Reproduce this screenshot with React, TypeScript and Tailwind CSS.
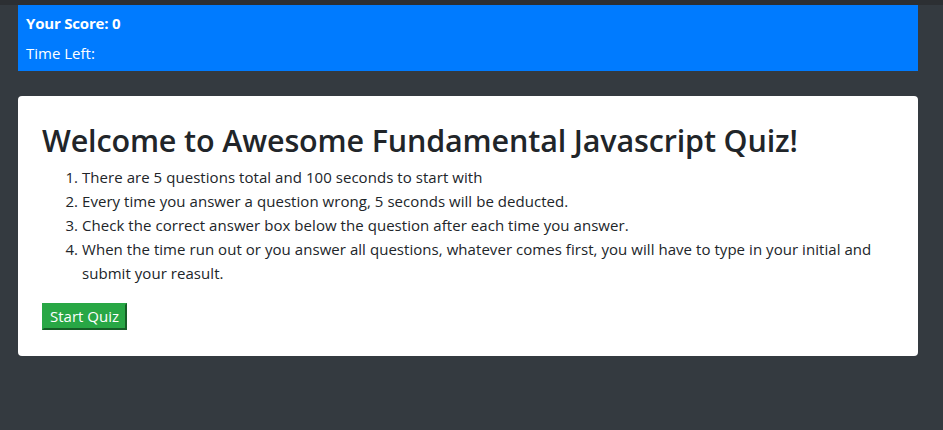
export default function App() {
  const font = { fontFamily: '"Open Sans", "Noto Sans", sans-serif' };
  return (
    <div className="min-h-[430px] bg-[#343a40] text-[#212529]" style={font}>
      <div className="h-[5px] bg-[#2c2f33]" />
      <div className="ml-[18px] w-[900px]">
        <div className="bg-[#007bff] text-white px-2 pt-[6px] pb-[6px] flex flex-col gap-[6px]">
          <div className="h-6 leading-6 text-[15px] font-bold tracking-[-0.2px]">Your Score: 0</div>
          <div className="h-6 leading-6 text-[15px]">Time Left:</div>
        </div>
        <div className="mt-[25px] bg-white rounded-[4px] px-6 pt-[24px] pb-[26px]">
          <h1 className="text-[30.5px] leading-[40px] font-semibold tracking-[-0.15px]">
            Welcome to Awesome Fundamental Javascript Quiz!
          </h1>
          <ol className="list-decimal pl-10 mt-[5px] text-[15px] leading-6 tracking-[0.05px]">
            <li>There are 5 questions total and 100 seconds to start with</li>
            <li>Every time you answer a question wrong, 5 seconds will be deducted.</li>
            <li>Check the correct answer box below the question after each time you answer.</li>
            <li>
              When the time run out or you answer all questions, whatever comes first, you will have to type in your initial and submit your reasult.
            </li>
          </ol>
          <button className="mt-[18px] h-[27px] px-[6px] bg-[#28a745] text-white text-[15px] leading-[23px] border-2 border-t-[#28a745] border-l-[#28a745] border-r-[#155d26] border-b-[#155d26]">
            Start Quiz
          </button>
        </div>
      </div>
    </div>
  );
}
